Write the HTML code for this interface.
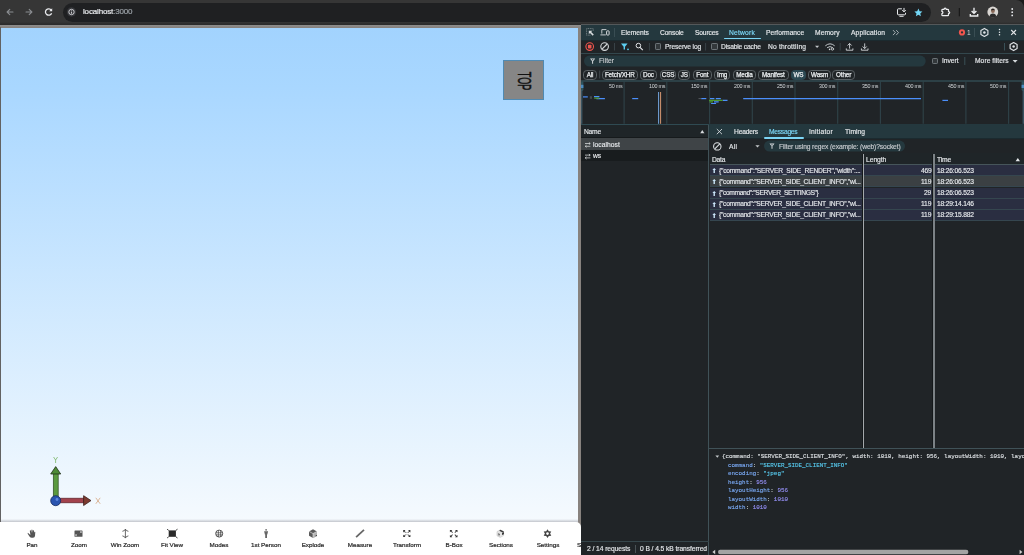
<!DOCTYPE html>
<html>
<head>
<meta charset="utf-8">
<title>localhost:3000</title>
<style>
*{box-sizing:border-box;margin:0;padding:0}
html,body{width:1024px;height:555px;overflow:hidden;background:#202427;font-family:"Liberation Sans",sans-serif;}
.a{position:absolute}
.t{position:absolute;white-space:nowrap;line-height:1;color:#dfe3e6;will-change:transform;}
#chrome{left:0;top:0;width:1024px;height:25px;background:linear-gradient(#363636 0,#363636 22px,#2c2c2c 24px)}
#pill{left:63px;top:3px;width:868px;height:19px;border-radius:10px;background:#1f2022}
#frame{left:0;top:25px;width:1024px;height:530px;background:linear-gradient(#8e8e8e 0,#87827e 2.5px,#87827e 100%)}
#page{left:1.2px;top:28px;width:576.8px;height:527px;background:linear-gradient(#a2d3fe 0,#a9d7ff 60px,#f5fafe 492px)}
#tb{left:0;top:522px;width:581px;height:33px;background:#fff;border-top-right-radius:5px}
#tbsh{left:1px;top:519px;width:577px;height:4px;background:linear-gradient(rgba(140,140,150,0) 0,rgba(140,140,150,.45) 70%,rgba(120,120,130,.55) 100%)}
#dt{left:581px;top:25px;width:443px;height:530px;background:#202427}
.tl{font-size:6.25px;color:#2a2a2a;text-align:center;width:60px;-webkit-text-stroke:0.22px #2a2a2a}

.d{font-size:6.7px;color:#e4e7ea;-webkit-text-stroke:0.16px currentColor}
.hl{position:absolute;background:#33474d;height:1px}
.vl{position:absolute;background:#3d4a4f;width:1px}
.cb{position:absolute;width:6.4px;height:6.4px;border:0.9px solid #6d7478;border-radius:1.2px;background:#33383b}
.chip{position:absolute;top:69.6px;height:9.8px;border:1px solid #5b6266;border-radius:3.8px;font-size:6.3px;letter-spacing:-0.12px;color:#e9ecee;-webkit-text-stroke:0.25px #e9ecee;text-align:center;line-height:8.2px;white-space:nowrap;will-change:transform}
</style>
</head>
<body>
<div class="a" id="chrome"></div>
<div class="a" id="pill"></div>
<svg class="a" style="left:0;top:0" width="1024" height="26" viewBox="0 0 1024 26">
  <!-- window corner -->
  <path d="M1016 0 H1024 V8 A8 8 0 0 0 1016 0 Z" fill="#1a1a1a"/>
  <!-- back -->
  <g stroke="#8a8d91" stroke-width="1.1" fill="none" stroke-linecap="round" stroke-linejoin="round">
    <path d="M13 12 H7.2 M9.8 9.3 L7.1 12 L9.8 14.7"/>
    <path d="M26 12 H31.8 M29.2 9.3 L31.9 12 L29.2 14.7"/>
  </g>
  <!-- reload -->
  <g stroke="#e8eaed" stroke-width="1.3" fill="none">
    <path d="M51.3 10.2 A3.2 3.2 0 1 0 51.6 13.2"/>
  </g>
  <path d="M52.2 8.3 V11.3 H49.2 Z" fill="#e8eaed"/>
  <!-- info -->
  <circle cx="71.5" cy="12" r="4.7" fill="#35363a"/>
  <circle cx="71.5" cy="12" r="2.7" fill="none" stroke="#e8eaed" stroke-width="0.8"/>
  <path d="M71.5 10.3 V10.9 M71.5 11.6 V13.7" stroke="#e8eaed" stroke-width="0.8"/>
  <!-- install -->
  <g stroke="#e8eaed" stroke-width="1" fill="none" stroke-linejoin="round" stroke-linecap="round">
    <path d="M901.5 8.8 H898.3 Q897.5 8.8 897.5 9.6 V14 Q897.5 14.8 898.3 14.8 H904.7 Q905.5 14.8 905.5 14 V13.2"/>
    <path d="M899.8 16.3 H903.2"/>
    <path d="M904 8.3 V11.6 M902.5 10.3 L904 11.8 L905.5 10.3"/>
  </g>
  <!-- star -->
  <path d="M918.4 8.6 L919.6 11.2 L922.4 11.5 L920.3 13.4 L920.9 16.2 L918.4 14.8 L915.9 16.2 L916.5 13.4 L914.4 11.5 L917.2 11.2 Z" fill="#73d7f7"/>
  <!-- extension -->
  <path d="M942.7 9.3 H944.1 Q944.1 8.1 945.1 8.1 Q946.1 8.1 946.1 9.3 H947.7 Q948.5 9.3 948.5 10.1 V11.5 Q949.7 11.5 949.7 12.5 Q949.7 13.5 948.5 13.5 V14.9 Q948.5 15.7 947.7 15.7 H942.7 Q941.9 15.7 941.9 14.9 V13.6 Q942.9 13.5 942.9 12.5 Q942.9 11.5 941.9 11.4 V10.1 Q941.9 9.3 942.7 9.3 Z" fill="none" stroke="#eceef0" stroke-width="1.25" stroke-linejoin="round"/>
  <path d="M959.3 8 V16.3" stroke="#0e0e0e" stroke-width="0.9"/>
  <!-- download -->
  <g stroke="#eceef0" stroke-width="1.35" fill="none" stroke-linecap="butt" stroke-linejoin="miter">
    <path d="M974 7.8 V13 M971.6 10.9 L974 13.3 L976.4 10.9"/>
    <path d="M970.3 14 V16 H977.7 V14"/>
  </g>
  <!-- avatar -->
  <circle cx="992.8" cy="12" r="5.4" fill="#d9d6d2"/>
  <path d="M989.6 16.4 Q990 13.6 992.9 13.6 Q995.8 13.6 996.2 16.4 A5.4 5.4 0 0 1 989.6 16.4 Z" fill="#2b2b2b"/>
  <circle cx="992.9" cy="11" r="1.9" fill="#8b6a58"/>
  <path d="M991 10.6 Q991 8.6 992.9 8.6 Q994.8 8.6 994.8 10.6 Q993.8 9.6 991 10.6Z" fill="#25201d"/>
  <!-- menu dots -->
  <circle cx="1012.2" cy="9" r="0.9" fill="#e8eaed"/>
  <circle cx="1012.2" cy="12.2" r="0.9" fill="#e8eaed"/>
  <circle cx="1012.2" cy="15.4" r="0.9" fill="#e8eaed"/>
</svg>
<div class="t" style="left:82.6px;top:8px;font-size:8px;color:#e8eaed;-webkit-text-stroke:0.2px currentColor;--w:49.4px;letter-spacing:-0.158px">localhost<span style="color:#9aa0a6">:3000</span></div>
<div class="a" id="frame"></div>
<div class="a" style="left:0;top:27px;width:1.2px;height:496px;background:#626262"></div>
<div class="a" id="page"></div>
<!-- view cube -->
<div class="a" style="left:502.5px;top:60.2px;width:41.8px;height:40.2px;background:#868686;border:1px solid #4f8ab3"></div>
<svg class="a" style="left:502.3px;top:60.2px" width="42" height="40" viewBox="0 0 42 40">
  <text transform="translate(16.2,11.8) rotate(90) scale(0.50,1)" font-family="Liberation Sans, sans-serif" font-size="18" fill="#111" stroke="#111" stroke-width="0.5">TOP</text>
</svg>
<!-- axes -->
<svg class="a" style="left:30px;top:450px" width="90" height="65" viewBox="30 450 90 65">
  <rect x="53.3" y="473.5" width="4.9" height="25" fill="#5b9a3f" stroke="#2f4a22" stroke-width="0.7"/>
  <path d="M55.7 466.6 L60.7 474 H50.7 Z" fill="#4e8a37" stroke="#1f2f18" stroke-width="0.8" stroke-linejoin="round"/>
  <rect x="58" y="498.2" width="25.5" height="4.6" fill="#a2424c" stroke="#5a2228" stroke-width="0.7"/>
  <path d="M91 500.6 L83.6 495.7 V505.5 Z" fill="#7c3b30" stroke="#3a1a16" stroke-width="0.8" stroke-linejoin="round"/>
  <circle cx="55.7" cy="500.7" r="5" fill="#2a55b0" stroke="#142a5e" stroke-width="0.8"/>
  <circle cx="57" cy="499.5" r="1.4" fill="#5f8ae0"/>
  <path d="M53.6 457 L55.6 460 L57.6 457 M55.6 460 V463" stroke="#7ab566" stroke-width="0.8" fill="none"/>
  <path d="M95.8 497.8 L100.2 503.8 M100.2 497.8 L95.8 503.8" stroke="#d6a680" stroke-width="0.8" fill="none"/>
</svg>
<div class="a" id="tbsh"></div>
<div class="a" id="tb"></div>
<svg class="a" style="left:0;top:522px" width="581" height="33" viewBox="0 522 581 33">
  <g transform="translate(31.6,533.6)"><path d="M-2.6 0.2 L-3.7 -0.9 Q-4.3 -0.4 -3.6 0.6 L-1.9 3.2 Q-1.2 4.2 0.2 4.2 H1.4 Q3.2 4.2 3.4 2.4 L3.7 -1.6 Q3.2 -2.3 2.7 -1.6 L2.5 -0.4 L2.4 -3 Q1.8 -3.7 1.3 -3 L1.2 -0.6 L0.9 -3.7 Q0.3 -4.3 -0.2 -3.7 L-0.1 -0.6 L-0.7 -3 Q-1.3 -3.6 -1.8 -2.9 L-1.2 1.4 Z" fill="#555"/></g>
  <g transform="translate(78.5,533.6)"><rect x="-4" y="-3.2" width="8" height="6.4" rx="0.6" fill="#555"/><path d="M-2.8 1.9 L-1.4 0.5 M-2.9 0.6 V2 H-1.5 M2.8 -1.9 L1.4 -0.5 M2.9 -0.6 V-2 H1.5" stroke="#ddd" stroke-width="0.6" fill="none"/></g>
  <g transform="translate(125.4,533.6)"><path d="M0 -4.2 V4.2 M-3 -2.3 Q-0.6 -2.6 0 -4.5 Q0.6 -2.6 3 -2.3 M-3 2.3 Q-0.6 2.6 0 4.5 Q0.6 2.6 3 2.3" stroke="#444" stroke-width="0.8" fill="none"/></g>
  <g transform="translate(172.3,533.6)"><rect x="-3.6" y="-3.2" width="7.2" height="6.4" fill="#2a2a2a"/><path d="M-5.2 -4.4 L-3.6 -3.2 M5.2 -4.4 L3.6 -3.2 M-5.2 4.4 L-3.6 3.2 M5.2 4.4 L3.6 3.2" stroke="#2a2a2a" stroke-width="0.9"/></g>
  <g transform="translate(219.2,533.6)"><circle r="3.5" fill="none" stroke="#444" stroke-width="0.9"/><path d="M-3.5 -0.8 H3.5 M-3.3 1.3 H3.3 M-0.8 -3.4 V3.4 M1.4 -3.2 V3.2" stroke="#444" stroke-width="0.7"/></g>
  <g transform="translate(266.1,533.6)"><circle cx="0" cy="-3.8" r="0.85" fill="#666"/><path d="M-2 -2.4 H2 L1.2 0.8 H0.9 V4.4 H-0.9 V0.8 H-1.2 Z" fill="#666"/></g>
  <g transform="translate(313.0,533.6)"><path d="M0 -4.4 L4 -2.2 V2.2 L0 4.4 L-4 2.2 V-2.2 Z" fill="#5a5a5a"/><path d="M0 0 L4 -2.2 V2.2 L0 4.4Z" fill="#b4b4b4"/><path d="M-4 -2.2 L0 0 L4 -2.2 M0 0 V4.4" stroke="#f0f0f0" stroke-width="0.6" fill="none"/><circle cx="3.3" cy="2" r="0.7" fill="#333"/></g>
  <g transform="translate(359.9,533.6)"><path d="M-4.4 2.8 L3.5 -4.3 L4.7 -3 L-3.2 4.1 Z" fill="#666"/></g>
  <g transform="translate(406.8,533.6)"><path d="M-3.6 -3.5 H-1.4 L-2.2 -2.3 L-1 -1.3 L-1.6 -0.9 L-2.7 -1.9 L-3.6 -1.2Z M3.6 -3.5 H1.4 L2.2 -2.3 L1 -1.3 L1.6 -0.9 L2.7 -1.9 L3.6 -1.2Z M-3.6 3.5 H-1.4 L-2.2 2.3 L-1 1.3 L-1.6 0.9 L-2.7 1.9 L-3.6 1.2Z M3.6 3.5 H1.4 L2.2 2.3 L1 1.3 L1.6 0.9 L2.7 1.9 L3.6 1.2Z" fill="#333"/><path d="M-1.6 -1.4 Q0 -0.6 1.6 -1.4 M-1.6 1.4 Q0 0.6 1.6 1.4" stroke="#777" stroke-width="0.5" fill="none"/></g>
  <g transform="translate(453.7,533.6)"><path d="M-3.8 -3.7 H-1.4 L-2.2 -2.7 L-0.8 -1.3 L-1.4 -0.7 L-2.8 -2.1 L-3.8 -1.3Z M3.8 -3.7 H1.4 L2.2 -2.7 L0.8 -1.3 L1.4 -0.7 L2.8 -2.1 L3.8 -1.3Z M-3.8 3.7 H-1.4 L-2.2 2.7 L-0.8 1.3 L-1.4 0.7 L-2.8 2.1 L-3.8 1.3Z M3.8 3.7 H1.4 L2.2 2.7 L0.8 1.3 L1.4 0.7 L2.8 2.1 L3.8 1.3Z" fill="#333"/></g>
  <g transform="translate(500.6,533.6)"><path d="M-0.4 -3.6 L3 -2 V2 L-0.4 3.8 L-3.6 2.2 V-2 Z" fill="#e4e4e4" stroke="#c4c4c4" stroke-width="0.6"/><path d="M-0.2 -3.8 L3.4 -2.2 L2 -1.2 L-1.4 -2.8Z" fill="#3c3c3c"/><path d="M-2.8 -0.8 L-0.8 0.2 V2.8 L-2.8 1.8Z" fill="#b0b0b0"/><path d="M-2.2 -0.2 L-1 0.4 V1.4 L-2.2 0.8Z" fill="#444"/><path d="M3.4 -1.6 V0.6 L1.4 1.4 V-0.6Z" fill="#3c3c3c"/></g>
  <g transform="translate(547.5,533.6)"><path d="M0 -4.4 L1.3 -2.3 L3.8 -2.2 L2.6 0 L3.8 2.2 L1.3 2.3 L0 4.4 L-1.3 2.3 L-3.8 2.2 L-2.6 0 L-3.8 -2.2 L-1.3 -2.3 Z" fill="#444"/><circle r="1.3" fill="#fff"/></g>
  <g transform="translate(594.4,533.6)"></g>
</svg>
<div class="t tl" style="left:1.6px;top:541.7px">Pan</div>
<div class="t tl" style="left:48.5px;top:541.7px">Zoom</div>
<div class="t tl" style="left:95.4px;top:541.7px">Win Zoom</div>
<div class="t tl" style="left:142.3px;top:541.7px">Fit View</div>
<div class="t tl" style="left:189.2px;top:541.7px">Modes</div>
<div class="t tl" style="left:236.1px;top:541.7px">1st Person</div>
<div class="t tl" style="left:283.0px;top:541.7px">Explode</div>
<div class="t tl" style="left:329.9px;top:541.7px">Measure</div>
<div class="t tl" style="left:376.8px;top:541.7px">Transform</div>
<div class="t tl" style="left:423.7px;top:541.7px">B-Box</div>
<div class="t tl" style="left:470.6px;top:541.7px">Sections</div>
<div class="t tl" style="left:517.5px;top:541.7px">Settings</div>
<div class="t tl" style="left:577.4px;top:541.7px;width:3.6px;overflow:hidden;text-align:left">S</div>
<div class="a" id="dt"></div>
<div class="a" style="left:581px;top:24.3px;width:443px;height:0.9px;background:#54585a"></div>
<!-- devtools tab bar -->
<div class="a" style="left:581px;top:25px;width:443px;height:15px;background:#24383e"></div>
<div class="hl" style="left:581px;top:39.5px;width:443px;background:#1b2a2f"></div>
<div class="t d" style="left:621.2px;top:30.0px;--w:27.9px;letter-spacing:0.001px">Elements</div>
<div class="t d" style="left:660.3px;top:30.0px;--w:23.7px;letter-spacing:-0.121px">Console</div>
<div class="t d" style="left:694.6px;top:30.0px;--w:23.4px;letter-spacing:-0.164px">Sources</div>
<div class="t d" style="left:729.2px;top:30.0px;color:#7cd6f6;--w:26.0px;letter-spacing:0.210px">Network</div>
<div class="a" style="left:724px;top:37.6px;width:36.5px;height:1.6px;background:#7cd6f6;border-radius:1px"></div>
<div class="t d" style="left:766.2px;top:30.0px;--w:38.1px;letter-spacing:-0.018px">Performance</div>
<div class="t d" style="left:815.2px;top:30.0px;--w:24.6px;letter-spacing:0.074px">Memory</div>
<div class="t d" style="left:851px;top:30.0px;--w:34.1px;letter-spacing:0.126px">Application</div>
<div class="t" style="left:967.4px;top:29.6px;font-size:6.6px;color:#d5d9dc">1</div>
<svg class="a" style="left:581px;top:25px" width="443" height="56" viewBox="581 25 443 56">
  <!-- inspect -->
  <path d="M590.4 35.2 H586.6 V28.6 H593.2 V31" stroke="#8e979b" stroke-width="0.8" fill="none" stroke-dasharray="1 0.7"/>
  <path d="M588.8 30.8 H592.3 L591.2 31.9 L593.8 34.6 L592.7 35.7 L590 33 L588.8 34.2 Z" fill="#d5d9dc"/>
  <!-- device -->
  <g stroke="#d5d9dc" stroke-width="0.9" fill="none">
    <path d="M601.8 33.6 V29.6 H606.4 M600.4 34.9 H605.8"/>
    <rect x="606.6" y="30.9" width="2.5" height="4.1" rx="0.5" stroke-width="1"/>
  </g>
  <path d="M614.5 28 V37" stroke="#3f5359" stroke-width="0.8"/>
  <!-- chevrons -->
  <path d="M893 30.1 L895.3 32.6 L893 35.1 M896.2 30.1 L898.5 32.6 L896.2 35.1" stroke="#c9cdd0" stroke-width="0.8" fill="none"/>
  <!-- error -->
  <circle cx="962" cy="32.4" r="3.1" fill="#f0554e"/>
  <circle cx="962" cy="32.4" r="1.15" fill="#2a2f33"/>
  <path d="M974.5 28 V37" stroke="#3f5359" stroke-width="0.8"/>
  <!-- gear -->
  <g transform="translate(984.4,32.4)">
    <path d="M0 -4 L3.5 -2 V2 L0 4 L-3.5 2 V-2 Z" fill="none" stroke="#dfe3e6" stroke-width="1.15" stroke-linejoin="round"/>
    <circle r="1.25" fill="#dfe3e6"/>
  </g>
  <circle cx="999.5" cy="29.6" r="0.75" fill="#e4e7ea"/><circle cx="999.5" cy="32.2" r="0.75" fill="#e4e7ea"/><circle cx="999.5" cy="34.8" r="0.75" fill="#e4e7ea"/>
  <path d="M1011.2 30 L1016 34.8 M1016 30 L1011.2 34.8" stroke="#e4e7ea" stroke-width="1.1"/>
  <!-- row 2 -->
  <circle cx="589.7" cy="46.6" r="3.8" fill="none" stroke="#f0554e" stroke-width="1.1"/>
  <rect x="587.9" y="44.8" width="3.6" height="3.6" rx="0.6" fill="#f0554e"/>
  <circle cx="604.6" cy="46.6" r="3.8" fill="none" stroke="#d5d9dc" stroke-width="1.1"/>
  <path d="M602 49.2 L607.2 44" stroke="#d5d9dc" stroke-width="1.1"/>
  <path d="M614.5 43 V50.5" stroke="#3f4a4f" stroke-width="0.8"/>
  <path d="M621 43.6 H627.6 L625 46.8 V49.6 H623.6 V46.8 Z" fill="#5ccdf0"/>
  <circle cx="628" cy="49.3" r="0.9" fill="#5ccdf0"/>
  <circle cx="638.4" cy="45.6" r="2.3" fill="none" stroke="#e4e7ea" stroke-width="1"/>
  <path d="M640 47.3 L642.8 50.1" stroke="#e4e7ea" stroke-width="1.2"/>
  <path d="M649.4 43 V50.5" stroke="#3f4a4f" stroke-width="0.8"/>
  <path d="M705.6 43 V50.5" stroke="#3f4a4f" stroke-width="0.8"/>
  <path d="M815 45.7 H819.2 L817.1 48 Z" fill="#c4c8cb"/>
  <!-- wifi -->
  <g stroke="#d5d9dc" stroke-width="0.9" fill="none" stroke-linecap="round">
    <path d="M825.6 45.6 Q830 41.8 834.4 45.6"/>
    <path d="M827.4 47.5 Q830 45.4 832.4 47.4"/>
    <circle cx="832.4" cy="49" r="1.2" stroke-width="0.8"/>
  </g>
  <circle cx="829.6" cy="49.4" r="0.8" fill="#d5d9dc"/>
  <path d="M840.2 43 V50.5" stroke="#3f4a4f" stroke-width="0.8"/>
  <g stroke="#d5d9dc" stroke-width="0.9" fill="none">
    <path d="M849.6 48.6 V43.6 M847.6 45.5 L849.6 43.4 L851.6 45.5 M846.3 48.4 V50.2 H852.9 V48.4"/>
    <path d="M864.7 43.4 V48.4 M862.7 46.5 L864.7 48.6 L866.7 46.5 M861.4 48.4 V50.2 H868 V48.4"/>
  </g>
  <path d="M1004.5 43 V50.5" stroke="#3f5a62" stroke-width="0.8"/>
  <g transform="translate(1013.6,46.6)">
    <path d="M0 -4 L3.5 -2 V2 L0 4 L-3.5 2 V-2 Z" fill="none" stroke="#dfe3e6" stroke-width="1.15" stroke-linejoin="round"/>
    <circle r="1.25" fill="#dfe3e6"/>
  </g>
  <!-- row 3 filter -->
  <rect x="584" y="55.6" width="341.7" height="11" rx="5.5" fill="#24383e"/>
  <path d="M590 58.5 H595.2 L593.1 61.2 V63.8 H592.1 V61.2 Z" fill="#d5d9dc"/><path d="M591.6 59.3 H593.6 L592.6 60.6Z" fill="#24383e"/>
  <path d="M964.8 57 V65" stroke="#3f5a62" stroke-width="0.8"/>
  <path d="M1012.6 60 H1017.6 L1015.1 62.8 Z" fill="#d5d9dc"/>
  <path d="M599.7 70.5 V78.5" stroke="#4a5256" stroke-width="0.8"/>
</svg>
<div class="hl" style="left:581px;top:53px;width:443px"></div>
<div class="cb" style="left:654.8px;top:43.4px"></div>
<div class="t d" style="left:664.7px;top:44.1px;--w:36.2px;letter-spacing:-0.112px">Preserve log</div>
<div class="cb" style="left:711.2px;top:43.4px"></div>
<div class="t d" style="left:721px;top:44.1px;--w:39.8px;letter-spacing:-0.170px">Disable cache</div>
<div class="t d" style="left:767.6px;top:44.1px;--w:38.2px;letter-spacing:0.164px">No throttling</div>
<div class="t d" style="left:598.8px;top:58.3px;color:#c6cacd;--w:15.1px;letter-spacing:0.037px">Filter</div>
<div class="cb" style="left:932px;top:57.8px"></div>
<div class="t d" style="left:941.8px;top:58.3px;--w:16.6px;letter-spacing:-0.022px">Invert</div>
<div class="t d" style="left:975px;top:58.3px;--w:33.7px;letter-spacing:0.052px">More filters</div>
<div class="chip" style="left:583.4px;width:14px">All</div>
<div class="chip" style="left:602.0px;width:35.5px">Fetch/XHR</div>
<div class="chip" style="left:640.2px;width:16.8px">Doc</div>
<div class="chip" style="left:659.5px;width:16.3px">CSS</div>
<div class="chip" style="left:678.0px;width:12.4px">JS</div>
<div class="chip" style="left:692.9px;width:18.6px">Font</div>
<div class="chip" style="left:713.8px;width:16.2px">Img</div>
<div class="chip" style="left:732.8px;width:22.9px">Media</div>
<div class="chip" style="left:758.0px;width:30.6px">Manifest</div>
<div class="chip" style="left:791.0px;width:14.8px;background:#2b4852;border-color:#2b4852">WS</div>
<div class="chip" style="left:807.6px;width:23.3px">Wasm</div>
<div class="chip" style="left:832.4px;width:23.1px">Other</div>
<!-- timeline -->
<div class="hl" style="left:581px;top:80.4px;width:443px;height:1.3px;background:#2c4046"></div>
<svg class="a" style="left:581px;top:80px" width="443" height="46" viewBox="581 80 443 46">
  <path d="M624.1 81 V123.8" stroke="#2f4349" stroke-width="1.1"/>
  <path d="M666.8 81 V123.8" stroke="#2f4349" stroke-width="1.1"/>
  <path d="M709.6 81 V123.8" stroke="#2f4349" stroke-width="1.1"/>
  <path d="M752.3 81 V123.8" stroke="#2f4349" stroke-width="1.1"/>
  <path d="M795.0 81 V123.8" stroke="#2f4349" stroke-width="1.1"/>
  <path d="M837.7 81 V123.8" stroke="#2f4349" stroke-width="1.1"/>
  <path d="M880.4 81 V123.8" stroke="#2f4349" stroke-width="1.1"/>
  <path d="M923.2 81 V123.8" stroke="#2f4349" stroke-width="1.1"/>
  <path d="M965.9 81 V123.8" stroke="#2f4349" stroke-width="1.1"/>
  <path d="M1008.6 81 V123.8" stroke="#2f4349" stroke-width="1.1"/>
  <rect x="581" y="81.2" width="2.4" height="9.6" rx="1.2" fill="#2d525c"/>
  <rect x="581" y="84.8" width="2.4" height="3.2" fill="#4c8cc0"/>
  <rect x="1021.6" y="81.2" width="2.4" height="9.6" rx="1.2" fill="#2d525c"/>
  <rect x="1021.6" y="84.8" width="2.4" height="3.2" fill="#4c8cc0"/>
  <path d="M581.8 90 V123.8 M1023.2 90 V123.8" stroke="#46697a" stroke-width="1"/>
  <g stroke="#4b8ffb" stroke-width="1.2">
    <path d="M583 96.9 H587.8"/>
    <path d="M594 96.7 H599.4 M596.4 98.6 H604.9"/>
    <path d="M632.2 98.6 H638.2"/>
    <path d="M701.2 98.6 H706.3"/>
    <path d="M710 98.6 H714.4 M715.8 98.6 H720.8 M722.6 100.4 H727.5 M714 101.9 H718.7 M711.1 103.5 H716.1"/>
    <path d="M743.2 98.6 H921"/>
    <path d="M942.4 100.4 H948"/>
  </g>
  <rect x="589.8" y="96.2" width="2.2" height="2.6" fill="#44494c"/>
  <path d="M594.2 98.2 H599.2 M709.1 100.4 H722.6 M709.5 101.9 H713" stroke="#4f9a2e" stroke-width="1.2"/>
  <path d="M698.5 98.6 H701.2" stroke="#5a6064" stroke-width="0.9"/>
  <path d="M658.6 92 V123.8" stroke="#7db4f2" stroke-width="0.9"/>
  <path d="M660.6 92 V123.8" stroke="#e9a57a" stroke-width="0.9"/>
</svg>
<div class="t" style="left:608.8px;top:84.2px;font-size:5.4px;color:#d3d7da;--w:13.3px;letter-spacing:-0.277px">50 ms</div>
<div class="t" style="left:648.5px;top:84.2px;font-size:5.4px;color:#d3d7da;--w:16.3px;letter-spacing:-0.231px">100 ms</div>
<div class="t" style="left:691.3px;top:84.2px;font-size:5.4px;color:#d3d7da;--w:16.3px;letter-spacing:-0.231px">150 ms</div>
<div class="t" style="left:734.0px;top:84.2px;font-size:5.4px;color:#d3d7da;--w:16.3px;letter-spacing:-0.231px">200 ms</div>
<div class="t" style="left:776.7px;top:84.2px;font-size:5.4px;color:#d3d7da;--w:16.3px;letter-spacing:-0.231px">250 ms</div>
<div class="t" style="left:819.4px;top:84.2px;font-size:5.4px;color:#d3d7da;--w:16.3px;letter-spacing:-0.231px">300 ms</div>
<div class="t" style="left:862.1px;top:84.2px;font-size:5.4px;color:#d3d7da;--w:16.3px;letter-spacing:-0.231px">350 ms</div>
<div class="t" style="left:904.9px;top:84.2px;font-size:5.4px;color:#d3d7da;--w:16.3px;letter-spacing:-0.231px">400 ms</div>
<div class="t" style="left:947.6px;top:84.2px;font-size:5.4px;color:#d3d7da;--w:16.3px;letter-spacing:-0.231px">450 ms</div>
<div class="t" style="left:990.3px;top:84.2px;font-size:5.4px;color:#d3d7da;--w:16.3px;letter-spacing:-0.231px">500 ms</div>
<!-- name panel -->
<div class="hl" style="left:581px;top:123.6px;width:443px;background:#33474d"></div>
<div class="a" style="left:581px;top:124.4px;width:128px;height:13.6px;background:#1f2528"></div>
<div class="hl" style="left:581px;top:137px;width:128px;background:#161a1c"></div>
<div class="hl" style="left:581px;top:124.4px;width:128px;height:0.9px;background:#2f4a52"></div>
<div class="t d" style="left:583.8px;top:128.8px;--w:16.9px;letter-spacing:-0.236px">Name</div>
<div class="a" style="left:581px;top:138.2px;width:128px;height:11.8px;background:#3f4447"></div>
<div class="a" style="left:581px;top:150.1px;width:128px;height:10.9px;background:#181c1e"></div>
<svg class="a" style="left:581px;top:125px" width="128" height="40" viewBox="581 125 128 40">
  <path d="M700.2 133.2 L702.3 130 L704.4 133.2 Z" fill="#d5d9dc"/>
  <g stroke="#d9dcde" stroke-width="0.75" fill="none">
    <path d="M585 143.5 H590.2 M588.9 142.4 L590.2 143.5 L588.9 144.6 M590.4 146.3 H585.2 M586.5 145.2 L585.2 146.3 L586.5 147.4"/>
    <path d="M585 155.1 H590.2 M588.9 154 L590.2 155.1 L588.9 156.2 M590.4 157.9 H585.2 M586.5 156.8 L585.2 157.9 L586.5 159"/>
  </g>
</svg>
<div class="t d" style="left:593px;top:141.6px;--w:26.8px;letter-spacing:0.044px">localhost</div>
<div class="t d" style="left:593px;top:153.2px;--w:8px;letter-spacing:-0.094px">ws</div>
<div class="vl" style="left:708.4px;top:125px;height:430px;background:#405258"></div>
<div class="hl" style="left:581px;top:541.2px;width:128px;background:#36464b"></div>
<div class="t d" style="left:586.5px;top:546.3px;--w:43.3px;letter-spacing:-0.063px">2 / 14 requests</div>
<div class="vl" style="left:634.8px;top:545.4px;height:8px;background:#4a5256"></div>
<div class="t d" style="left:639.9px;top:546.3px;--w:67px;letter-spacing:-0.074px">0 B / 4.5 kB transferred</div>
<!-- right panel -->
<div class="a" style="left:709.4px;top:124.4px;width:315px;height:13.8px;background:#24383e"></div>
<div class="hl" style="left:709.6px;top:138px;width:315px;background:#1b2a2f"></div>
<div class="t d" style="left:733.5px;top:129.2px;--w:24px;letter-spacing:-0.183px">Headers</div>
<div class="t d" style="left:769.4px;top:129.2px;--w:28.4px;letter-spacing:-0.261px;color:#7cd6f6">Messages</div>
<div class="a" style="left:764px;top:137px;width:39.5px;height:1.6px;background:#7cd6f6;border-radius:1px"></div>
<div class="t d" style="left:809px;top:129.2px;--w:24px;letter-spacing:0.229px">Initiator</div>
<div class="t d" style="left:844.6px;top:129.2px;--w:20.1px;letter-spacing:0.045px">Timing</div>
<svg class="a" style="left:709px;top:125px" width="315" height="100" viewBox="709 125 315 100">
  <path d="M716.8 129 L722 134.2 M722 129 L716.8 134.2" stroke="#d5d9dc" stroke-width="0.9"/>
  <circle cx="717.3" cy="146.4" r="3.7" fill="none" stroke="#dfe3e6" stroke-width="1.05"/>
  <path d="M714.8 148.9 L719.8 143.9" stroke="#dfe3e6" stroke-width="1.05"/>
  <path d="M755.4 145.2 H759.6 L757.5 147.5 Z" fill="#c4c8cb"/>
  <rect x="764" y="140.6" width="141" height="10.9" rx="5.45" fill="#24383e"/>
  <path d="M769.5 143.6 H774.5 L772.5 146.2 V148.8 H771.5 V146.2 Z" fill="#d5d9dc"/><path d="M771 144.4 H773 L772 145.7Z" fill="#24383e"/>
</svg>
<div class="t d" style="left:729px;top:143.7px;--w:8.4px;letter-spacing:0.321px">All</div>
<div class="t d" style="left:779.4px;top:143.6px;--w:121.6px;letter-spacing:-0.114px;color:#c6cacd">Filter using regex (example: (web)?socket)</div>
<div class="hl" style="left:709.6px;top:152.8px;width:315px;background:#3d4d52"></div>
<div class="a" style="left:709.6px;top:153.4px;width:315px;height:11.4px;background:#1f2528"></div>
<div class="hl" style="left:709.6px;top:164.2px;width:315px;background:#46555a"></div>
<svg class="a" style="left:1013px;top:155px" width="10" height="8" viewBox="1013 155 10 8"><path d="M1015.6 161.2 L1017.8 158 L1020 161.2 Z" fill="#e4e7ea"/></svg>
<div class="t d" style="left:711.6px;top:156.5px;--w:13.2px;letter-spacing:-0.235px">Data</div>
<div class="t d" style="left:866px;top:156.5px;--w:20.3px;letter-spacing:-0.028px">Length</div>
<div class="t d" style="left:936.5px;top:156.5px;--w:14.2px;letter-spacing:-0.106px">Time</div>
<div class="a" style="left:709.6px;top:165.2px;width:315px;height:11.2px;background:#2a2e41;border-bottom:0.8px solid #35464f"></div>
<svg class="a" style="left:711px;top:165.2px" width="7" height="11" viewBox="0 0 7 11"><path d="M3.2 3 L5 5.1 H3.9 V8 H2.5 V5.1 H1.4 Z" fill="#cbe6fa"/></svg>
<div class="t d" style="left:719px;top:167.5px;--w:141.5px;letter-spacing:-0.227px">{"command":"SERVER_SIDE_RENDER","width":...</div>
<div class="t d" style="left:920.7px;top:167.5px;--w:10.6px;letter-spacing:-0.191px">469</div>
<div class="t d" style="left:936.5px;top:167.5px;--w:36.8px;letter-spacing:-0.189px">18:26:06.523</div>
<div class="a" style="left:709.6px;top:176.3px;width:315px;height:11.2px;background:#3b4043;border-bottom:0.8px solid #35464f"></div>
<svg class="a" style="left:711px;top:176.3px" width="7" height="11" viewBox="0 0 7 11"><path d="M3.2 3 L5 5.1 H3.9 V8 H2.5 V5.1 H1.4 Z" fill="#cbe6fa"/></svg>
<div class="t d" style="left:719px;top:178.7px;--w:141.5px;letter-spacing:-0.267px">{"command":"SERVER_SIDE_CLIENT_INFO","wi...</div>
<div class="t d" style="left:921.1px;top:178.7px;--w:10.2px;letter-spacing:-0.157px">119</div>
<div class="t d" style="left:936.5px;top:178.7px;--w:36.8px;letter-spacing:-0.189px">18:26:06.523</div>
<div class="a" style="left:709.6px;top:187.5px;width:315px;height:11.2px;background:#2a2e41;border-bottom:0.8px solid #35464f"></div>
<svg class="a" style="left:711px;top:187.5px" width="7" height="11" viewBox="0 0 7 11"><path d="M3.2 3 L5 5.1 H3.9 V8 H2.5 V5.1 H1.4 Z" fill="#cbe6fa"/></svg>
<div class="t d" style="left:719px;top:189.8px;--w:99.5px;letter-spacing:-0.353px">{"command":"SERVER_SETTINGS"}</div>
<div class="t d" style="left:924.3px;top:189.8px;--w:7.0px;letter-spacing:-0.227px">29</div>
<div class="t d" style="left:936.5px;top:189.8px;--w:36.8px;letter-spacing:-0.189px">18:26:06.523</div>
<div class="a" style="left:709.6px;top:198.6px;width:315px;height:11.2px;background:#2a2e41;border-bottom:0.8px solid #35464f"></div>
<svg class="a" style="left:711px;top:198.6px" width="7" height="11" viewBox="0 0 7 11"><path d="M3.2 3 L5 5.1 H3.9 V8 H2.5 V5.1 H1.4 Z" fill="#cbe6fa"/></svg>
<div class="t d" style="left:719px;top:200.9px;--w:141.5px;letter-spacing:-0.267px">{"command":"SERVER_SIDE_CLIENT_INFO","wi...</div>
<div class="t d" style="left:921.1px;top:200.9px;--w:10.2px;letter-spacing:-0.157px">119</div>
<div class="t d" style="left:936.5px;top:200.9px;--w:36.8px;letter-spacing:-0.189px">18:29:14.146</div>
<div class="a" style="left:709.6px;top:209.8px;width:315px;height:11.2px;background:#2a2e41;border-bottom:0.8px solid #35464f"></div>
<svg class="a" style="left:711px;top:209.8px" width="7" height="11" viewBox="0 0 7 11"><path d="M3.2 3 L5 5.1 H3.9 V8 H2.5 V5.1 H1.4 Z" fill="#cbe6fa"/></svg>
<div class="t d" style="left:719px;top:212.1px;--w:141.5px;letter-spacing:-0.267px">{"command":"SERVER_SIDE_CLIENT_INFO","wi...</div>
<div class="t d" style="left:921.1px;top:212.1px;--w:10.2px;letter-spacing:-0.157px">119</div>
<div class="t d" style="left:936.5px;top:212.1px;--w:36.8px;letter-spacing:-0.189px">18:29:15.882</div>
<div class="vl" style="left:862.2px;top:153.6px;height:295px;width:0.6px;background:#14181a"></div><div class="vl" style="left:862.7px;top:153.6px;height:295px;width:1.5px;background:#a4a8ab"></div>
<div class="vl" style="left:932.3px;top:153.6px;height:295px;width:0.6px;background:#14181a"></div><div class="vl" style="left:932.9px;top:153.6px;height:295px;width:2.2px;background:#7c8286"></div>
<div class="hl" style="left:709.4px;top:448.2px;width:315px;background:#405258"></div>
<svg class="a" style="left:714px;top:452px" width="8" height="8" viewBox="714 452 8 8"><path d="M715.4 455.4 H719.2 L717.3 457.8 Z" fill="#c4c8cb"/></svg>
<div class="t" style="left:721.7px;top:454.2px;font-family:'Liberation Mono',monospace;font-size:5.88px;-webkit-text-stroke:0.12px currentColor;color:#dde1e4">{command: "SERVER_SIDE_CLIENT_INFO", width: 1010, height: 956, layoutWidth: 1010, layoutHeight: 956, …}</div>
<div class="t" style="left:727.8px;top:462.6px;font-family:'Liberation Mono',monospace;font-size:5.88px;-webkit-text-stroke:0.12px currentColor;color:#dde1e4"><span style="color:#7aaaf5">command</span>: <span style="color:#58cdf2">"SERVER_SIDE_CLIENT_INFO"</span></div>
<div class="t" style="left:727.8px;top:471.1px;font-family:'Liberation Mono',monospace;font-size:5.88px;-webkit-text-stroke:0.12px currentColor;color:#dde1e4"><span style="color:#7aaaf5">encoding</span>: <span style="color:#58cdf2">"jpeg"</span></div>
<div class="t" style="left:727.8px;top:479.6px;font-family:'Liberation Mono',monospace;font-size:5.88px;-webkit-text-stroke:0.12px currentColor;color:#dde1e4"><span style="color:#7aaaf5">height</span>: <span style="color:#9590f6">956</span></div>
<div class="t" style="left:727.8px;top:488.0px;font-family:'Liberation Mono',monospace;font-size:5.88px;-webkit-text-stroke:0.12px currentColor;color:#dde1e4"><span style="color:#7aaaf5">layoutHeight</span>: <span style="color:#9590f6">956</span></div>
<div class="t" style="left:727.8px;top:496.5px;font-family:'Liberation Mono',monospace;font-size:5.88px;-webkit-text-stroke:0.12px currentColor;color:#dde1e4"><span style="color:#7aaaf5">layoutWidth</span>: <span style="color:#9590f6">1010</span></div>
<div class="t" style="left:727.8px;top:504.9px;font-family:'Liberation Mono',monospace;font-size:5.88px;-webkit-text-stroke:0.12px currentColor;color:#dde1e4"><span style="color:#7aaaf5">width</span>: <span style="color:#9590f6">1010</span></div>
<svg class="a" style="left:709px;top:548px" width="315" height="7" viewBox="709 548 315 7">
  <path d="M715.2 549.8 V554.2 L712.4 552 Z" fill="#d0d0d0"/>
  <path d="M1019.6 549.8 V554.2 L1022.4 552 Z" fill="#d0d0d0"/>
  <rect x="718" y="549.8" width="250.4" height="4.4" rx="2.2" fill="#a4a4a4"/>
</svg>
</body>
</html>
